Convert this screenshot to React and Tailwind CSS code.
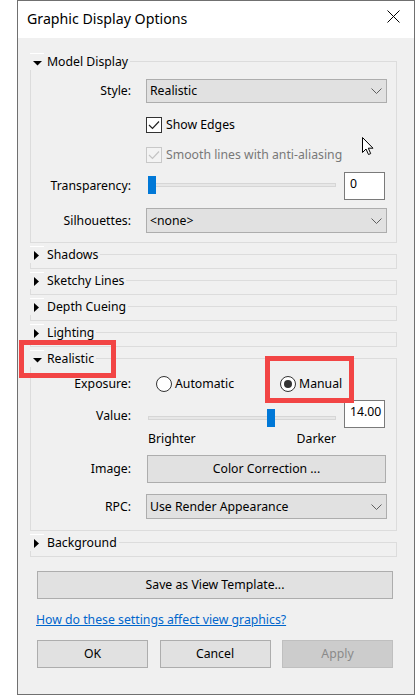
import React from "react"

const line = "border-[#dcdcdc]"

const Chevron = () => (
	<svg width="11" height="6" viewBox="0 0 11 6" className="shrink-0">
		<polyline points="0.5,0.5 5.5,5.5 10.5,0.5" fill="none" stroke="#5f5f5f" strokeWidth="1" />
	</svg>
)

const Dropdown = ({ value, h = "h-[25px]" }) => (
	<div className={`${h} w-[241px] flex items-center justify-between bg-[#e1e1e1] border border-[#adadad] pl-[3px] pr-[4px]`}>
		<span>{value}</span>
		<Chevron />
	</div>
)

const Checkbox = ({ checked, disabled }) => (
	<div className={`w-[16px] h-[16px] border flex items-center justify-center ${disabled ? "border-[#c8c8c8] bg-[#f3f3f3]" : "border-[#333333] bg-white"}`}>
		{checked && (
			<svg width="14" height="14" viewBox="0 0 14 14">
				<polyline points="2,7 5.5,10.5 12,3.5" fill="none" stroke={disabled ? "#c4c4c4" : "#222222"} strokeWidth="1.2" />
			</svg>
		)}
	</div>
)

const Radio = ({ checked }) => (
	<div className="w-[16px] h-[16px] rounded-full border border-[#333333] bg-white flex items-center justify-center">
		{checked && <div className="w-[8px] h-[8px] rounded-full bg-[#333333]" />}
	</div>
)

// track with a blue thumb, pos is the thumb's left offset in px
const Slider = ({ pos, className = "" }) => (
	<div className={`relative w-[188px] h-[18px] flex items-center ${className}`}>
		<div className="w-full h-[4px] bg-[#e7e7e7] border border-[#d6d6d6]" />
		<div className="absolute top-0 w-[8px] h-[18px] bg-[#0078d7]" style={{ left: pos }} />
	</div>
)

const NumberBox = ({ value }) => (
	<div className="ml-auto mr-[2px] w-[41px] h-[28px] bg-white border border-[#7a7a7a] pl-[5px] pt-[3px] leading-[16px]">
		{value}
	</div>
)

const Row = ({ label, className = "", labelClass = "", children }) => (
	<div className={`flex items-center ${className}`}>
		<div className={`w-[100px] text-right ${labelClass}`}>{label}</div>
		<div className="ml-[15px] w-[241px] flex items-center">{children}</div>
	</div>
)

const GroupHeader = ({ title, open }) => (
	<div className="flex h-[17px]">
		<div className="w-[14px] border-t border-white flex items-center justify-center">
			{open ? (
				<svg width="9" height="5" viewBox="0 0 9 5" className="mt-[2px]"><polygon points="0,0 9,0 4.5,4.5" fill="#000" /></svg>
			) : (
				<svg width="5" height="9" viewBox="0 0 5 9" className="ml-[-1px]"><polygon points="0,0 5,4.5 0,9" fill="#000" /></svg>
			)}
		</div>
		<span className="ml-[3px] pr-[2px] leading-[17px]">{title}</span>
		<div className={`flex-1 mt-[8px] border-t border-r ${line}`} />
	</div>
)

const Group = ({ title, open, bodyClass = "pb-[9px]", children }) => (
	<div>
		<GroupHeader title={title} open={open} />
		{open ? (
			<div className={`border-x border-b ${line} pt-[9px] ${bodyClass}`}>{children}</div>
		) : (
			<div className={`h-[6px] border-x border-b ${line}`} />
		)}
	</div>
)

const Button = ({ children, disabled, className = "" }) => (
	<div className={`h-[28px] flex items-center justify-center border ${disabled ? "bg-[#cccccc] border-[#bfbfbf] text-[#8a8a8a]" : "bg-[#e1e1e1] border-[#adadad]"} ${className}`}>
		{children}
	</div>
)

const App = () => (
	<div className="bg-white w-[416px] h-[695px] font-['Noto_Sans',sans-serif] text-[12.25px] text-black leading-[16px]">
		<div className="relative ml-[17px] w-[398px] h-[695px] border border-[#707070] flex flex-col">

			{/* Title bar */}
			<div className="h-[37px] bg-white flex items-center justify-between pl-[9px] pr-[14px] shrink-0">
				<span className="text-[14.2px] leading-[20px] mb-[2px]">Graphic Display Options</span>
				<svg width="13" height="13" viewBox="0 0 13 13" className="mb-[6px]">
					<path d="M0.5 0.5 L12.5 12.5 M12.5 0.5 L0.5 12.5" stroke="#000" strokeWidth="1" />
				</svg>
			</div>

			{/* Body */}
			<div className="flex-1 bg-[#f0f0f0] pt-[15px] pl-[12px] pr-[17px] flex flex-col">
				<div className="flex flex-col gap-[3px]">
					<Group title="Model Display" open>
						<Row label="Style:" className="h-[24px]"><Dropdown value="Realistic" h="h-[24px]" /></Row>
						<div className="mt-[14px] pl-[115px] flex items-center gap-[4px] h-[16px]">
							<Checkbox checked />
							<span>Show Edges</span>
						</div>
						<div className="mt-[14px] pl-[115px] flex items-center gap-[4px] h-[16px] text-[#787878]">
							<Checkbox checked disabled />
							<span>Smooth lines with anti-aliasing</span>
						</div>
						<Row label="Transparency:" className="mt-[9px] h-[28px]">
							<Slider pos={0} className="ml-[2px] mt-[-3px]" />
							<NumberBox value="0" />
						</Row>
						<Row label="Silhouettes:" className="mt-[8px] h-[25px]"><Dropdown value="<none>" /></Row>
					</Group>
					<Group title="Shadows" />
					<Group title="Sketchy Lines" />
					<Group title="Depth Cueing" />
					<Group title="Lighting" />
					<Group title="Realistic" open bodyClass="pb-[11px]">
						<Row label="Exposure:" className="h-[16px]">
							<div className="ml-[10px] flex items-center gap-[3px]">
								<Radio />
								<span>Automatic</span>
							</div>
							<div className="ml-[46px] flex items-center gap-[3px]">
								<Radio checked />
								<span>Manual</span>
							</div>
						</Row>
						<Row label="Value:" className="mt-[8px] h-[28px] items-start" labelClass="mt-[8px]">
							<Slider pos={119} className="ml-[2px] mt-[8px]" />
							<NumberBox value="14.00" />
						</Row>
						<div className="mt-[3px] ml-[117px] w-[188px] flex justify-between leading-[15px]">
							<span>Brighter</span>
							<span>Darker</span>
						</div>
						<Row label="Image:" className="mt-[10px] h-[25px]">
							<Button className="ml-[1px] w-[239px] h-[25px]">Color Correction ...</Button>
						</Row>
						<Row label="RPC:" className="mt-[13px] h-[25px]"><Dropdown value="Use Render Appearance" /></Row>
					</Group>
					<Group title="Background" />
				</div>

				<div className="ml-[7px] w-[356px]">
					<Button className="mt-[14px]">Save as View Template...</Button>
					<div className="mt-[13px] ml-[-1px] text-[#0066cc] underline">How do these settings affect view graphics?</div>
					<div className="mt-[12px] flex justify-between">
						<Button className="w-[111px]">OK</Button>
						<Button className="w-[111px]">Cancel</Button>
						<Button className="w-[111px]" disabled>Apply</Button>
					</div>
				</div>
			</div>

			{/* Callout highlights */}
			<div className="absolute left-[1px] top-[339px] w-[97px] h-[38px] border-[5px] border-[#f24545]" />
			<div className="absolute left-[247px] top-[355px] w-[89px] h-[47px] border-[5px] border-[#f24545]" />

			{/* Mouse pointer */}
			<svg width="13" height="20" viewBox="0 0 13 20" className="absolute left-[344px] top-[136px]">
				<path d="M0.5 0.5 L0.5 15.5 L4 12 L6.5 17.5 L8.7 16.6 L6.3 11.2 L11 11.2 Z" fill="#fff" stroke="#000" strokeWidth="1" strokeLinejoin="round" />
			</svg>
		</div>
	</div>
)

export default App
